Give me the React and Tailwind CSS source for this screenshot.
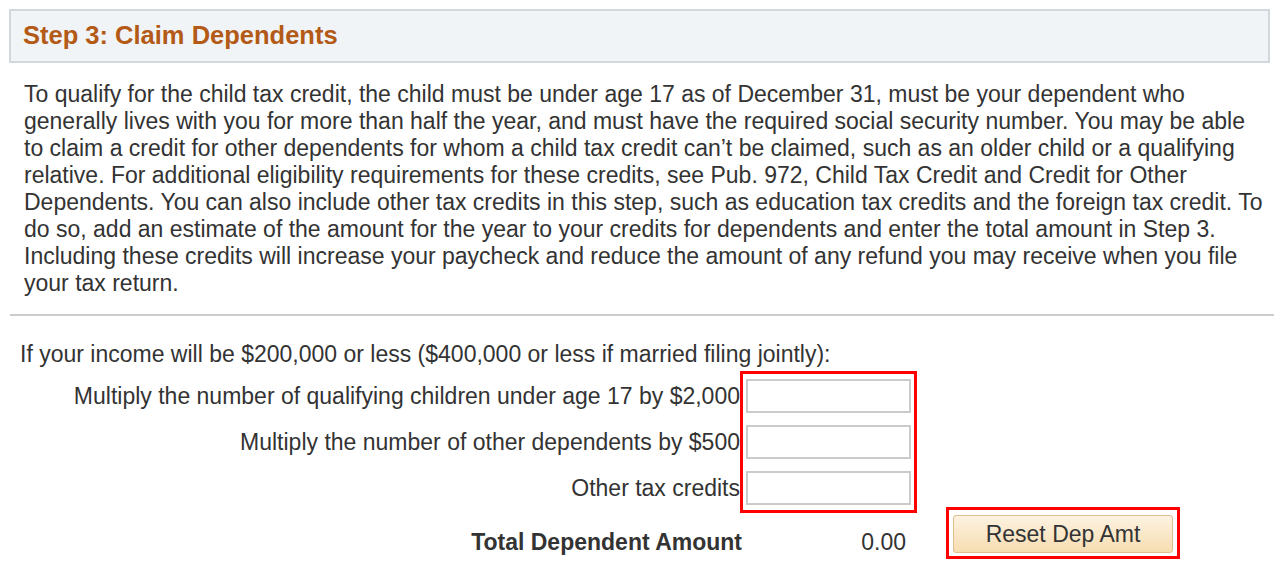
import React from 'react';

const paragraphLines = [
  'To qualify for the child tax credit, the child must be under age 17 as of December 31, must be your dependent who',
  'generally lives with you for more than half the year, and must have the required social security number. You may be able',
  'to claim a credit for other dependents for whom a child tax credit can\u2019t be claimed, such as an older child or a qualifying',
  'relative. For additional eligibility requirements for these credits, see Pub. 972, Child Tax Credit and Credit for Other',
  'Dependents. You can also include other tax credits in this step, such as education tax credits and the foreign tax credit. To',
  'do so, add an estimate of the amount for the year to your credits for dependents and enter the total amount in Step 3.',
  'Including these credits will increase your paycheck and reduce the amount of any refund you may receive when you file',
  'your tax return.',
];

const rows = [
  { id: 'children', label: 'Multiply the number of qualifying children under age 17 by $2,000' },
  { id: 'other', label: 'Multiply the number of other dependents by $500' },
  { id: 'credits', label: 'Other tax credits' },
];

const App = () => {
  return (
    <div
      className="w-[1287px] h-[571px] bg-white text-[#333333] overflow-hidden"
      style={{ fontFamily: '"Liberation Sans", Arial, sans-serif' }}
    >
      {/* Header */}
      <div className="ml-[9px] mr-[17px] mt-[9px] h-[54px] border-2 border-[#d3d8dd] bg-[#f1f4f6] flex items-center pl-[12px]">
        <h2 className="text-[25.5px] font-bold text-[#b35a17] leading-none">Step 3: Claim Dependents</h2>
      </div>

      {/* Explanation */}
      <p className="ml-[24px] mt-[18px] text-[23px] leading-[27px] whitespace-nowrap">
        {paragraphLines.map((line, i) => (
          <React.Fragment key={i}>
            {line}
            {i < paragraphLines.length - 1 && <br />}
          </React.Fragment>
        ))}
      </p>

      <div className="ml-[10px] mr-[13px] mt-[17px] h-[2px] bg-[#cccccc]" />

      {/* Income condition */}
      <p className="ml-[20px] mt-[25px] text-[23px] leading-[27px] whitespace-nowrap">
        If your income will be $200,000 or less ($400,000 or less if married filing jointly):
      </p>

      <div className="flex mt-[3px]">
        <div className="w-[740px] flex flex-col gap-[12px] py-[8px]">
          {rows.map((row) => (
            <div key={row.id} className="h-[34px] flex items-center justify-end text-[23px] whitespace-nowrap">
              {row.label}
            </div>
          ))}
        </div>
        <div className="border-[3px] border-[#ff0000] px-[3px] py-[5px] flex flex-col gap-[12px]">
          {rows.map((row) => (
            <input
              key={row.id}
              type="text"
              className="w-[165px] h-[34px] border-2 border-[#cbcbcb] bg-white outline-none"
            />
          ))}
        </div>
      </div>

      {/* Total */}
      <div className="flex items-start -mt-[6px]">
        <div className="w-[742px] pt-[23px] text-right text-[23px] font-bold leading-[24px] whitespace-nowrap">
          Total Dependent Amount
        </div>
        <div className="w-[164px] pt-[23px] text-right text-[23px] leading-[24px]">0.00</div>
        <div className="ml-[40px] border-[3px] border-[#ff0000] px-[4px] pt-[5px] pb-[3px]">
          <button
            type="button"
            className="w-[220px] h-[38px] rounded-[3px] border border-[#dfbf8f] bg-gradient-to-b from-[#fdf2e1] to-[#f7ddb1] text-[23px] text-[#333333]"
          >
            Reset Dep Amt
          </button>
        </div>
      </div>
    </div>
  );
};

export default App;
